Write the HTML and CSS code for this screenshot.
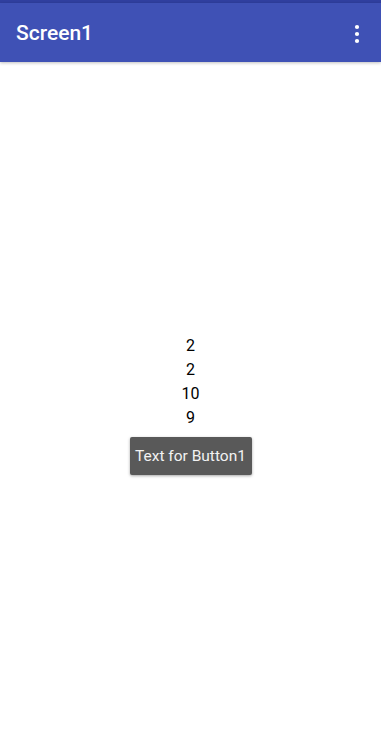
FILE: index.html
```html
<!DOCTYPE html>
<html>
<head>
<meta charset="utf-8">
<link rel="stylesheet" href="styles.css">
</head>
<body>
<div class="status"></div>
<header class="appbar">
  <span class="title">Screen1</span>
  <svg class="menu" width="6" height="20" viewBox="0 0 6 20"><circle cx="3" cy="3" r="2.1" fill="#fff"/><circle cx="3" cy="10" r="2.1" fill="#fff"/><circle cx="3" cy="17" r="2.1" fill="#fff"/></svg>
</header>
<main class="content">
  <div class="label">2</div>
  <div class="label">2</div>
  <div class="label">10</div>
  <div class="label">9</div>
  <button class="btn">Text for Button1</button>
</main>
</body>
</html>
```
FILE: styles.css
```css
html, body { margin: 0; padding: 0; }
body {
  width: 381px;
  height: 750px;
  background: #fff;
  font-family: Roboto, "Noto Sans", sans-serif;
  display: flex;
  flex-direction: column;
  overflow: hidden;
}
.status { height: 3px; background: #303f9f; flex: none; }
.appbar {
  height: 59px;
  flex: none;
  background: #3f51b5;
  display: flex;
  align-items: center;
  justify-content: space-between;
  padding: 0 21px 0 16px;
  box-shadow: 0 1px 3px rgba(0,0,0,0.25);
  position: relative;
  z-index: 1;
}
.title { color: #fff; font-size: 21px; font-weight: 500; }
.menu { display: block; margin-top: 2px; }
.content {
  flex: 1;
  display: flex;
  flex-direction: column;
  align-items: center;
  justify-content: center;
  padding-bottom: 4px;
}
.label {
  font-size: 16px;
  line-height: 24px;
  color: #000;
}
.btn {
  margin-top: 7px;
  width: 122px;
  height: 38px;
  background: #595959;
  color: #f2f2f2;
  border: none;
  border-radius: 2px;
  font-family: Roboto, "Noto Sans", sans-serif;
  font-size: 15.5px;
  padding: 0;
  box-shadow: 0 1px 3px rgba(0,0,0,0.35);
}
```
